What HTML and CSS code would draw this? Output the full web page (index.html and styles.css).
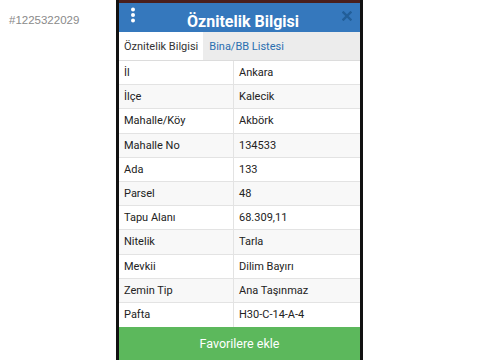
FILE: index.html
```html
<!DOCTYPE html>
<html lang="tr">
<head>
<meta charset="utf-8">
<link rel="stylesheet" href="styles.css">
</head>
<body>
<div class="page">
  <div class="side-left"><span class="listing-id">#1225322029</span></div>
  <div class="phone">
    <div class="topstrip"></div>
    <div class="header">
      <svg class="kebab" width="6" height="16" viewBox="0 0 6 16"><circle cx="3" cy="2.5" r="2" fill="#fff"/><circle cx="3" cy="8" r="2" fill="#fff"/><circle cx="3" cy="13.5" r="2" fill="#fff"/></svg>
      <div class="title">Öznitelik Bilgisi</div>
      <svg class="close" width="10" height="10" viewBox="0 0 10 10"><path d="M1.5 1.5 L8.5 8.5 M8.5 1.5 L1.5 8.5" stroke="#1f5a93" stroke-width="2.4" stroke-linecap="square"/></svg>
    </div>
    <div class="tabs">
      <div class="tab active">Öznitelik Bilgisi</div>
      <div class="tab">Bina/BB Listesi</div>
    </div>
    <div class="table">
      <div class="row"><div class="cell key">İl</div><div class="cell val">Ankara</div></div>
      <div class="row"><div class="cell key">İlçe</div><div class="cell val">Kalecik</div></div>
      <div class="row"><div class="cell key">Mahalle/Köy</div><div class="cell val">Akbörk</div></div>
      <div class="row"><div class="cell key">Mahalle No</div><div class="cell val">134533</div></div>
      <div class="row"><div class="cell key">Ada</div><div class="cell val">133</div></div>
      <div class="row"><div class="cell key">Parsel</div><div class="cell val">48</div></div>
      <div class="row"><div class="cell key">Tapu Alanı</div><div class="cell val">68.309,11</div></div>
      <div class="row"><div class="cell key">Nitelik</div><div class="cell val">Tarla</div></div>
      <div class="row"><div class="cell key">Mevkii</div><div class="cell val">Dilim Bayırı</div></div>
      <div class="row"><div class="cell key">Zemin Tip</div><div class="cell val">Ana Taşınmaz</div></div>
      <div class="row"><div class="cell key">Pafta</div><div class="cell val">H30-C-14-A-4</div></div>
    </div>
    <div class="fav">Favorilere ekle</div>
  </div>
  <div class="side-right"></div>
</div>
</body>
</html>
```
FILE: styles.css
```css
html, body {
  margin: 0;
  padding: 0;
  background: #fff;
}
body {
  font-family: Roboto, "Liberation Sans", Arial, sans-serif;
  width: 480px;
  height: 360px;
  overflow: hidden;
}
.page {
  display: flex;
  height: 360px;
}
.side-left {
  width: 116px;
  padding: 9px 0 0 9px;
  box-sizing: border-box;
}
.listing-id {
  font-family: "Liberation Sans", Arial, sans-serif;
  font-size: 11.5px;
  color: #8a8a8a;
}
.phone {
  width: 247px;
  height: 360px;
  box-sizing: border-box;
  border-left: 3px solid #111;
  border-right: 3px solid #111;
  display: flex;
  flex-direction: column;
  background: #fff;
}
.topstrip {
  height: 3px;
  background: #4a1f1c;
}
.header {
  height: 29px;
  background: #3578bd;
  display: flex;
  align-items: center;
  padding: 0 8px 0 11px;
  box-sizing: border-box;
}
.kebab {
  display: block;
  margin-top: -6px;
}
.title {
  flex: 1;
  text-align: center;
  color: #fff;
  font-weight: bold;
  font-size: 16px;
  padding-left: 8px;
  margin-top: 8px;
}
.close {
  display: block;
  margin-top: -3px;
  opacity: 0.85;
}
.tabs {
  height: 28px;
  background: #ececec;
  display: flex;
  border-bottom: 1px solid #dcdcdc;
}
.tab {
  font-size: 11px;
  color: #2a6eb0;
  padding: 0 6px;
  display: flex;
  align-items: center;
  white-space: nowrap;
}
.tab.active {
  background: #fff;
  color: #333;
  padding: 0 5px;
}
.table {
  display: flex;
  flex-direction: column;
}
.row {
  display: flex;
  height: 24.2px;
  border-bottom: 1px solid #e3e3e3;
  box-sizing: border-box;
}
.row:nth-child(even) {
  background: #f8f8f8;
}
.row:last-child {
  border-bottom: none;
}
.cell {
  font-size: 11px;
  color: #222;
  display: flex;
  align-items: center;
}
.key {
  width: 115px;
  padding-left: 5px;
  box-sizing: border-box;
  border-right: 1px solid #e3e3e3;
}
.val {
  padding-left: 5px;
}
.fav {
  flex: 1;
  background: #5cb85c;
  color: #fff;
  font-size: 12.5px;
  display: flex;
  align-items: center;
  justify-content: center;
}
.side-right {
  flex: 1;
}
```
